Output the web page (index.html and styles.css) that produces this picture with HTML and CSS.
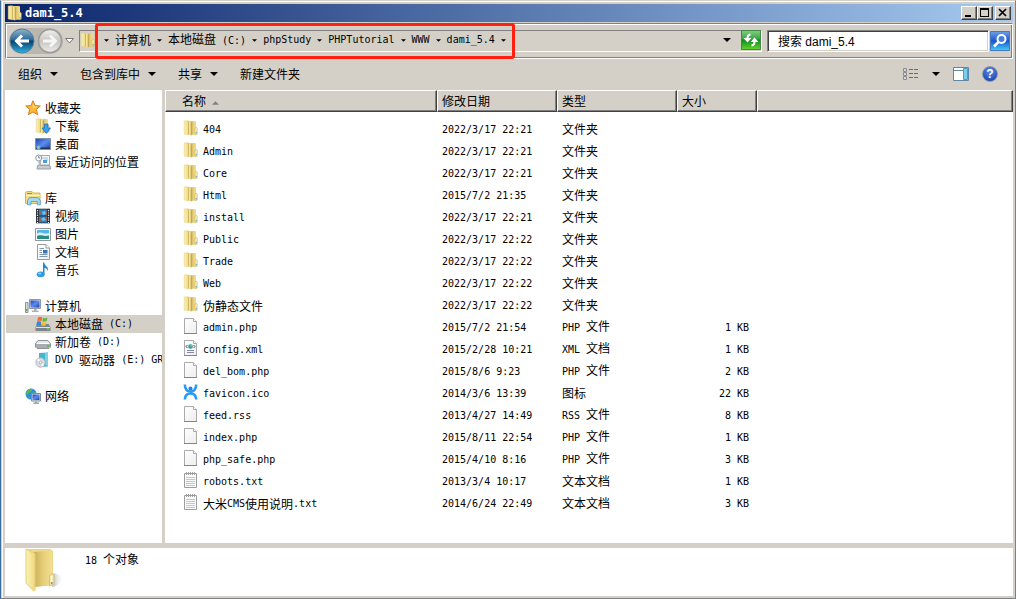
FILE: index.html
```html
<!DOCTYPE html>
<html lang="zh-CN">
<head>
    <meta charset="UTF-8">
    <meta name="viewport" content="width=device-width, initial-scale=1.0">
    <title>dami_5.4</title>
    <link rel="stylesheet" href="styles.css">
</head>
<body>
    <!-- icon sprite -->
    <svg class="sprite" aria-hidden="true">
        <defs>
            <linearGradient id="gFolder" x1="0" x2="1" y1="0" y2="0">
                <stop offset="0" stop-color="#fbf2b4"/><stop offset="1" stop-color="#efd980"/>
            </linearGradient>
            <linearGradient id="gFace" x1="0" x2="1" y1="0" y2="0">
                <stop offset="0" stop-color="#c9ae5c"/><stop offset=".5" stop-color="#e6ce78"/>
                <stop offset="1" stop-color="#f2df90"/>
            </linearGradient>
            <linearGradient id="gBack" x1="0" x2="0" y1="0" y2="1">
                <stop offset="0" stop-color="#8fb4cc"/><stop offset=".45" stop-color="#2c6a98"/>
                <stop offset=".5" stop-color="#0c3f6c"/><stop offset="1" stop-color="#25b4e6"/>
            </linearGradient>
            <linearGradient id="gFwd" x1="0" x2="0" y1="0" y2="1">
                <stop offset="0" stop-color="#f2f1ee"/><stop offset=".5" stop-color="#c6c5c1"/>
                <stop offset="1" stop-color="#ecebe8"/>
            </linearGradient>
            <linearGradient id="gPage" x1="0" x2="1" y1="0" y2="1">
                <stop offset="0" stop-color="#fff"/><stop offset="1" stop-color="#ededed"/>
            </linearGradient>
            <linearGradient id="gGreen" x1="0" x2="0" y1="0" y2="1">
                <stop offset="0" stop-color="#7fd083"/><stop offset=".45" stop-color="#37a542"/>
                <stop offset=".5" stop-color="#0f8c1c"/><stop offset="1" stop-color="#62d32c"/>
            </linearGradient>
            <linearGradient id="gBlue" x1="0" x2="0" y1="0" y2="1">
                <stop offset="0" stop-color="#6f9fe8"/><stop offset=".5" stop-color="#1d55cf"/>
                <stop offset="1" stop-color="#3fd0f7"/>
            </linearGradient>
            <linearGradient id="gScreen" x1="0" x2="1" y1="0" y2="1">
                <stop offset="0" stop-color="#1f3fae"/><stop offset=".5" stop-color="#5b8cf0"/>
                <stop offset="1" stop-color="#1b3aa8"/>
            </linearGradient>
            <linearGradient id="gShade" x1="0" x2="1" y1="0" y2="0">
                <stop offset="0" stop-color="#b5b5b5"/><stop offset="1" stop-color="#fff" stop-opacity="0"/>
            </linearGradient>
        </defs>
        <symbol id="folder" viewBox="0 0 16 16">
            <path d="M2 1H12L13 2V14H2z" fill="#ecd57c"/>
            <path d="M8 1.500H12.500V14.500L8 15z" fill="url(#gFace)"/>
            <path d="M1.200 1L5.500 .8V14.800L1.200 14z" fill="url(#gFolder)" stroke="#e2cb72" stroke-width=".5"/>
            <path d="M5.500 1.500L8 2.500V15.500L5.500 14.500z" fill="#f4e49a"/>
            <path d="M5.500 1.500V14.500" stroke="#cdb05a" stroke-width=".8"/>
            <path d="M8.200 2.500V15.300" stroke="#bd9f4a" stroke-width=".9"/>
            <path d="M12 8Q13.200 6.500 14.200 8V14L12 14.800z" fill="#f8efc0" stroke="#d4b24e" stroke-width=".6"/>
            <path d="M12.700 12h1v1.500h-1z" fill="#4ba7d8"/>
        </symbol>
        <symbol id="page" viewBox="0 0 16 16">
            <path d="M1.500 .5H10.500L13.500 3.500V15.500H1.500z" fill="url(#gPage)" stroke="#aaa"/>
            <path d="M10.500 .5V3.500h3" fill="#fff" stroke="#aaa"/>
            <path d="M1 15.500H14" stroke="#858585"/>
        </symbol>
        <symbol id="xml" viewBox="0 0 16 16">
            <use href="#page"/>
            <circle cx="7.500" cy="6.500" r="2.300" fill="#2f9b8c"/>
            <circle cx="8" cy="6" r="1" fill="#65c9ee"/>
            <path d="M4.500 5L3 6.500 4.500 8M10.500 5L12 6.500 10.500 8" fill="none" stroke="#445"/>
            <path d="M4 10.500H11M4 12.500H11" stroke="#8d86a8"/>
        </symbol>
        <symbol id="txt" viewBox="0 0 16 16">
            <path d="M1.500 1.500H13.500V15.500H1.500z" fill="#f8fafb" stroke="#9c9c9c"/>
            <path d="M3 5.500H12M3 7.500H12M3 9.500H12M3 11.500H12M3 13.500H12" stroke="#b4ccd8"/>
            <path d="M3.500 0V3M5.500 0V3M7.500 0V3M9.500 0V3M11.500 0V3" stroke="#9a9a9a" stroke-width=".9"/>
        </symbol>
        <symbol id="ico" viewBox="0 0 16 16">
            <path d="M1.800 .5C2 5 4 7.500 7.500 7.500S13 5 13.200 .5M1.800 15.500C2 11.500 4 9.500 7.500 9.500S13 11.500 13.200 15.500" fill="none" stroke="#2b9af0" stroke-width="2.600"/>
            <circle cx="7.500" cy="4.500" r="2" fill="#2183dd"/>
        </symbol>
        <symbol id="star" viewBox="0 0 16 16">
            <path d="M8 .8L10.100 5.600 15.300 6 11.300 9.400 12.600 14.700 8 11.900 3.400 14.700 4.700 9.400 .7 6 5.900 5.600z" fill="#fdbb3c" stroke="#d9781c"/>
            <path d="M8 3L9.300 6.500 12.500 6.800 8 8z" fill="#ffe79a"/>
        </symbol>
        <symbol id="download" viewBox="0 0 16 16">
            <use href="#folder"/>
            <path d="M9.500 6h3.500v4H15.500L11.300 15.500 7 10H9.500z" fill="#3ba2ea" stroke="#1669b8" stroke-width=".7"/>
        </symbol>
        <symbol id="desktop" viewBox="0 0 16 16">
            <path d="M.5 2.500H15.500V13.500H.5z" fill="url(#gScreen)" stroke="#7f93a6"/>
            <path d="M1 11.500H15V13H1z" fill="#26334a"/>
            <circle cx="3.500" cy="11.500" r="2" fill="#4fc3e8"/>
            <path d="M3 10.500h1v1H3z" fill="#f6d048"/>
        </symbol>
        <symbol id="recent" viewBox="0 0 16 16">
            <path d="M5.500 1.500H14.500V11H5.500z" fill="#f4f7f9" stroke="#a5adb3"/>
            <path d="M7 4h6M9 6h4" stroke="#a4bccb"/>
            <path d="M8 6h4v3H8z" fill="#4a9bd6"/>
            <path d="M2.500 11.500H15L15.500 15H2z" fill="#c8cccf" stroke="#9a9fa3"/>
            <path d="M4.500 7V12" stroke="#b4bac0" stroke-width="2"/>
            <circle cx="3.700" cy="4" r="3" fill="#fff" stroke="#8b98a4"/>
            <path d="M3.700 2V4H5.200" fill="none" stroke="#4e6478" stroke-width=".8"/>
        </symbol>
        <symbol id="library" viewBox="0 0 16 16">
            <path d="M.5 2.500L2 1.500H7L8.500 3H15V13.500H.5z" fill="#f2dc87" stroke="#d5b456"/>
            <path d="M2 3.500H7" stroke="#58a64a"/>
            <path d="M1 5.500H15" stroke="#fff7cd"/>
            <path d="M2.500 14.800V10.500L4.500 7.500H13L15.300 10.500V14.800H12.300V11.500H6V14.800z" fill="#9fd8ef" stroke="#4c9ac5" stroke-width=".8"/>
        </symbol>
        <symbol id="video" viewBox="0 0 16 16">
            <path d="M1 .7H15V15.300H1z" fill="#273039"/>
            <path d="M4 1.500H12V7.500H4zM4 8.500H12V14.500H4z" fill="#2d82c7"/>
            <path d="M4 2L7 5 4 7.500M12 2L9 5 12 7.500M4 9L8 12 4 14.500M12 9L9 11 12 13" fill="#9f5d4b"/>
            <path d="M7 4L10 3 11 6 8 7zM6 11l3-2 2 3-3 1z" fill="#65c6f0"/>
            <path d="M2.500 2V15M13.500 2V15" stroke="#e8eef2" stroke-width="1.200" stroke-dasharray="1.200 1.200"/>
        </symbol>
        <symbol id="picture" viewBox="0 0 16 16">
            <path d="M.5 2.500H15.500V14.500H.5z" fill="#fff" stroke="#8c979f"/>
            <path d="M2 4H14V13H2z" fill="#54b3e8"/>
            <path d="M2 8C5 4 9 9 14 7V10H2z" fill="#d9f1f7"/>
            <path d="M2 10C5 8 9 11 14 9.500V13H2z" fill="#278d82"/>
        </symbol>
        <symbol id="document" viewBox="0 0 16 16">
            <path d="M2.500 .5H11L14.500 4V15.500H2.500z" fill="url(#gPage)" stroke="#9a9a9a"/>
            <path d="M11 .5V4h3.500" fill="#fff" stroke="#9a9a9a"/>
            <path d="M4.500 4.500H9M4.500 6.500H7M4.500 8.500H7M4.500 10.500H12.500M4.500 12.500H12.500" stroke="#8198ad"/>
            <path d="M8 6H12.500V9.500H8z" fill="#3574b8"/>
        </symbol>
        <symbol id="music" viewBox="0 0 16 16">
            <path d="M8 .5H9.300C9.500 4 14 4.500 13 9 12.300 7 11 6.200 9.500 6V12H8z" fill="#2388cf"/>
            <ellipse cx="5.700" cy="12.300" rx="4" ry="2.900" fill="#2d9be2"/>
            <ellipse cx="4.700" cy="11.500" rx="1.700" ry="1" fill="#8bd1f7"/>
        </symbol>
        <symbol id="computer" viewBox="0 0 16 16">
            <path d="M.5 4.500H3V14.500H.5z" fill="#d8dde0" stroke="#8b9298"/>
            <path d="M1 11h1.500v2H1z" fill="#4fb44a"/>
            <path d="M4.500 1.500H15.500V10.500H4.500z" fill="#d5dbdf" stroke="#8d98a2"/>
            <path d="M5.500 2.500H14.500V9.500H5.500z" fill="url(#gScreen)"/>
            <path d="M9 11h2.500v1.500H9zM7 12.500H13.500V14H7z" fill="#aab1b7"/>
        </symbol>
        <symbol id="cdrive" viewBox="0 0 16 16">
            <path d="M2.500 8H13.500L15.500 11V15H.5V11z" fill="#7c858c"/>
            <path d="M1 11.500H15" stroke="#dfe4e7"/>
            <path d="M12 13h2" stroke="#62d747" stroke-width="1.500"/>
            <path d="M3 1.500C5 .3 6 1 7.300 1.500L6.500 5C5 4.500 4 4.500 2.200 5z" fill="#ee6a36"/>
            <path d="M8 1.800C9.500 2.500 11 2.300 12.500 1.500L11.600 5C10 5.800 8.500 5.600 7.300 5.200z" fill="#69b53b"/>
            <path d="M2 5.700C4 4.900 5 5.300 6.300 5.800L5.500 9.300C4 8.700 3 8.800 1.300 9.300z" fill="#3887d6"/>
            <path d="M7 6C8.500 6.700 10 6.500 11.400 5.900L10.600 9.400C9 10 7.500 9.800 6.200 9.400z" fill="#f5bd30"/>
        </symbol>
        <symbol id="drive" viewBox="0 0 16 16">
            <path d="M3 6.500H13L15.500 9.500V13L14 14.500H2L.5 13V9.500z" fill="#e4e6e7" stroke="#8d9296"/>
            <path d="M1 9.800H15V13L14 14H2L1 13z" fill="#a9adb0"/>
            <path d="M2 9.500H14" stroke="#fff"/>
            <path d="M12 12h2" stroke="#43bd36" stroke-width="1.500"/>
        </symbol>
        <symbol id="dvd" viewBox="0 0 16 16">
            <path d="M4 1L13 .5V14.500L4 15z" fill="#47b5cf"/>
            <path d="M10 1L13 .5V14.500L10 12z" fill="#7bd5e3"/>
            <circle cx="5.500" cy="10.500" r="4.700" fill="#d9dee2" stroke="#9da4aa" stroke-width=".7"/>
            <path d="M5.500 10.500L2 8 4 6.500zM5.500 10.500L9 13 7.500 14.500z" fill="#fff"/>
            <circle cx="5.500" cy="10.500" r="1.300" fill="#fff" stroke="#8f989e" stroke-width=".7"/>
        </symbol>
        <symbol id="network" viewBox="0 0 16 16">
            <circle cx="6" cy="6" r="5.500" fill="#2e8de0"/>
            <path d="M2 3C4 .8 6 .5 7.500 1L6 4 3.500 5 2.500 7 1 6zM8 4L11 5 9 8 6 8zM3 8L5 9 5 11z" fill="#57bb44"/>
            <path d="M6.500 5.500H15.500V13H6.500z" fill="#dbe3e8" stroke="#7f8e9b"/>
            <path d="M7.500 6.500H14.500V12H7.500z" fill="url(#gScreen)"/>
            <path d="M10 13.500H12V14.500H14V16H8.500V14.500H10z" fill="#9ba6ae"/>
        </symbol>
        <symbol id="tri" viewBox="0 0 8 4">
            <path d="M0 0H8L4 4z" fill="#000"/>
        </symbol>
    </svg>

    <div class="window">
        <header class="titlebar">
            <svg class="icon"><use href="#folder"/></svg>
            <h1>dami_5.4</h1>
            <button class="winbtn" aria-label="最小化"><svg viewBox="0 0 12 10"><path d="M2 7H8V9H2z"/></svg></button>
            <button class="winbtn" aria-label="最大化"><svg viewBox="0 0 12 10"><path d="M1 0H10V9H1zM2 2V8H9V2z" fill-rule="evenodd"/></svg></button>
            <button class="winbtn close" aria-label="关闭"><svg viewBox="0 0 12 10"><path d="M2 1L9 8M9 1L2 8" stroke="#000" stroke-width="1.700"/></svg></button>
        </header>

        <div class="navbar">
            <div class="history">
                <div class="pill">
                    <button aria-label="后退"><svg viewBox="0 0 26 26">
                        <circle cx="13" cy="13" r="12" fill="url(#gBack)" stroke="#5a7f99"/>
                        <path d="M20 13H8M13 7.500L7.500 13 13 18.500" fill="none" stroke="#fff" stroke-width="3"/>
                    </svg></button>
                    <button aria-label="前进"><svg viewBox="0 0 26 26">
                        <circle cx="13" cy="13" r="11.500" fill="url(#gFwd)" stroke="#9b9b99" stroke-width="1.500"/>
                        <path d="M6 13H18M13 7.500L18.500 13 13 18.500" fill="none" stroke="#f6f6f4" stroke-width="3"/>
                    </svg></button>
                </div>
                <button aria-label="最近的页面"><svg class="recent-arrow" viewBox="0 0 9 6"><path d="M.5 .5H8.500L4.500 5z" fill="#fff" stroke="#777"/></svg></button>
            </div>
            <nav class="address" aria-label="地址">
                <svg class="icon"><use href="#folder"/></svg>
                <button class="chev" aria-label="展开"><svg><use href="#tri"/></svg></button>
                <a href="#">计算机</a>
                <button class="chev" aria-label="展开"><svg><use href="#tri"/></svg></button>
                <a href="#">本地磁盘<span class="en"> (C:)</span></a>
                <button class="chev" aria-label="展开"><svg><use href="#tri"/></svg></button>
                <a href="#" class="en">phpStudy</a>
                <button class="chev" aria-label="展开"><svg><use href="#tri"/></svg></button>
                <a href="#" class="en">PHPTutorial</a>
                <button class="chev" aria-label="展开"><svg><use href="#tri"/></svg></button>
                <a href="#" class="en">WWW</a>
                <button class="chev" aria-label="展开"><svg><use href="#tri"/></svg></button>
                <a href="#" class="en">dami_5.4</a>
                <button class="chev" aria-label="展开"><svg><use href="#tri"/></svg></button>
                <button class="drop" aria-label="历史记录"><svg class="arrow"><use href="#tri"/></svg></button>
                <button class="go" aria-label="刷新"><svg viewBox="0 0 20 20">
                    <path d="M.5 .5H19.500V19.500H.5z" fill="url(#gGreen)" stroke="#3f8a45"/>
                    <path d="M9.500 4.500Q6.500 5 6.500 8V9M10.500 15.500Q13.500 15 13.500 12V11" fill="none" stroke="#fff" stroke-width="2"/>
                    <path d="M2.500 8H10.500L6.500 12.500zM9.500 12H17.500L13.500 7.500z" fill="#fff"/>
                </svg></button>
                <span class="highlight"></span>
            </nav>
            <form class="search">
                <input type="text" value="搜索 dami_5.4" aria-label="搜索">
                <button type="button" class="go" aria-label="搜索"><svg viewBox="0 0 20 20">
                    <path d="M.5 .5H19.500V19.500H.5z" fill="url(#gBlue)" stroke="#4a78c0"/>
                    <circle cx="11.500" cy="8" r="4" fill="#3f7fe0" stroke="#fff" stroke-width="2"/>
                    <path d="M8.500 11L4 15.500" stroke="#fff" stroke-width="2.500"/>
                </svg></button>
            </form>
        </div>

        <div class="toolbar">
            <button>组织<svg class="arrow"><use href="#tri"/></svg></button>
            <button>包含到库中<svg class="arrow"><use href="#tri"/></svg></button>
            <button>共享<svg class="arrow"><use href="#tri"/></svg></button>
            <button>新建文件夹</button>
            <div class="view-tools">
                <button aria-label="更改视图"><svg class="icon" viewBox="0 0 16 16">
                    <path d="M.5 2.500h3v3h-3zM.5 6.500h3v3h-3zM.5 10.500h3v3h-3z" fill="#fff" stroke="#8b8b8b"/>
                    <path d="M2 3.500v1M2 7.500v1M2 11.500v1" stroke="#3e6a9a"/>
                    <path d="M6 3.500H15M6 7.500H15M6 11.500H15" stroke="#5f6f7b" stroke-dasharray="4 1"/>
                </svg></button>
                <button aria-label="更多选项"><svg class="arrow"><use href="#tri"/></svg></button>
                <button aria-label="预览窗格"><svg class="icon" viewBox="0 0 16 16">
                    <path d="M.5 1.500H15.500V14.500H.5z" fill="#fff" stroke="#5e86a8"/>
                    <path d="M1 4.500H10" stroke="#5e86a8"/>
                    <path d="M10.500 2.500H14.500V13.500H10.500z" fill="#79cfe8" stroke="#4d9fbf"/>
                </svg></button>
                <button aria-label="帮助" class="help">?</button>
            </div>
        </div>

        <main class="panes">
            <nav class="tree">
                <ul>
                    <li><a href="#"><svg class="icon"><use href="#star"/></svg>收藏夹</a></li>
                    <li class="child"><a href="#"><svg class="icon"><use href="#download"/></svg>下载</a></li>
                    <li class="child"><a href="#"><svg class="icon"><use href="#desktop"/></svg>桌面</a></li>
                    <li class="child"><a href="#"><svg class="icon"><use href="#recent"/></svg>最近访问的位置</a></li>
                </ul>
                <ul>
                    <li><a href="#"><svg class="icon"><use href="#library"/></svg>库</a></li>
                    <li class="child"><a href="#"><svg class="icon"><use href="#video"/></svg>视频</a></li>
                    <li class="child"><a href="#"><svg class="icon"><use href="#picture"/></svg>图片</a></li>
                    <li class="child"><a href="#"><svg class="icon"><use href="#document"/></svg>文档</a></li>
                    <li class="child"><a href="#"><svg class="icon"><use href="#music"/></svg>音乐</a></li>
                </ul>
                <ul>
                    <li><a href="#"><svg class="icon"><use href="#computer"/></svg>计算机</a></li>
                    <li class="child selected"><a href="#"><svg class="icon"><use href="#cdrive"/></svg>本地磁盘<span class="en"> (C:)</span></a></li>
                    <li class="child"><a href="#"><svg class="icon"><use href="#drive"/></svg>新加卷<span class="en"> (D:)</span></a></li>
                    <li class="child"><a href="#"><svg class="icon"><use href="#dvd"/></svg><span class="en">DVD </span>驱动器<span class="en"> (E:) GR</span></a></li>
                </ul>
                <ul>
                    <li><a href="#"><svg class="icon"><use href="#network"/></svg>网络</a></li>
                </ul>
            </nav>

            <div class="list">
                <table>
                    <colgroup>
                        <col class="c-name"><col class="c-date"><col class="c-type"><col class="c-size"><col>
                    </colgroup>
                    <thead>
                        <tr>
                            <th>名称<svg class="sort" viewBox="0 0 8 4"><path d="M0 4H8L4 0z" fill="#808080"/></svg></th>
                            <th>修改日期</th>
                            <th>类型</th>
                            <th>大小</th>
                            <th></th>
                        </tr>
                    </thead>
                    <tbody>
                        <tr><td><svg class="icon"><use href="#folder"/></svg><span class="en">404</span></td><td class="en">2022/3/17 22:21</td><td>文件夹</td><td></td><td></td></tr>
                        <tr><td><svg class="icon"><use href="#folder"/></svg><span class="en">Admin</span></td><td class="en">2022/3/17 22:21</td><td>文件夹</td><td></td><td></td></tr>
                        <tr><td><svg class="icon"><use href="#folder"/></svg><span class="en">Core</span></td><td class="en">2022/3/17 22:21</td><td>文件夹</td><td></td><td></td></tr>
                        <tr><td><svg class="icon"><use href="#folder"/></svg><span class="en">Html</span></td><td class="en">2015/7/2 21:35</td><td>文件夹</td><td></td><td></td></tr>
                        <tr><td><svg class="icon"><use href="#folder"/></svg><span class="en">install</span></td><td class="en">2022/3/17 22:21</td><td>文件夹</td><td></td><td></td></tr>
                        <tr><td><svg class="icon"><use href="#folder"/></svg><span class="en">Public</span></td><td class="en">2022/3/17 22:22</td><td>文件夹</td><td></td><td></td></tr>
                        <tr><td><svg class="icon"><use href="#folder"/></svg><span class="en">Trade</span></td><td class="en">2022/3/17 22:22</td><td>文件夹</td><td></td><td></td></tr>
                        <tr><td><svg class="icon"><use href="#folder"/></svg><span class="en">Web</span></td><td class="en">2022/3/17 22:22</td><td>文件夹</td><td></td><td></td></tr>
                        <tr><td><svg class="icon"><use href="#folder"/></svg>伪静态文件</td><td class="en">2022/3/17 22:22</td><td>文件夹</td><td></td><td></td></tr>
                        <tr><td><svg class="icon"><use href="#page"/></svg><span class="en">admin.php</span></td><td class="en">2015/7/2 21:54</td><td><span class="en">PHP </span>文件</td><td class="en">1 KB</td><td></td></tr>
                        <tr><td><svg class="icon"><use href="#xml"/></svg><span class="en">config.xml</span></td><td class="en">2015/2/28 10:21</td><td><span class="en">XML </span>文档</td><td class="en">1 KB</td><td></td></tr>
                        <tr><td><svg class="icon"><use href="#page"/></svg><span class="en">del_bom.php</span></td><td class="en">2015/8/6 9:23</td><td><span class="en">PHP </span>文件</td><td class="en">2 KB</td><td></td></tr>
                        <tr><td><svg class="icon"><use href="#ico"/></svg><span class="en">favicon.ico</span></td><td class="en">2014/3/6 13:39</td><td>图标</td><td class="en">22 KB</td><td></td></tr>
                        <tr><td><svg class="icon"><use href="#page"/></svg><span class="en">feed.rss</span></td><td class="en">2013/4/27 14:49</td><td><span class="en">RSS </span>文件</td><td class="en">8 KB</td><td></td></tr>
                        <tr><td><svg class="icon"><use href="#page"/></svg><span class="en">index.php</span></td><td class="en">2015/8/11 22:54</td><td><span class="en">PHP </span>文件</td><td class="en">1 KB</td><td></td></tr>
                        <tr><td><svg class="icon"><use href="#page"/></svg><span class="en">php_safe.php</span></td><td class="en">2015/4/10 8:16</td><td><span class="en">PHP </span>文件</td><td class="en">3 KB</td><td></td></tr>
                        <tr><td><svg class="icon"><use href="#txt"/></svg><span class="en">robots.txt</span></td><td class="en">2013/3/4 10:17</td><td>文本文档</td><td class="en">1 KB</td><td></td></tr>
                        <tr><td><svg class="icon"><use href="#txt"/></svg>大米<span class="en">CMS</span>使用说明<span class="en">.txt</span></td><td class="en">2014/6/24 22:49</td><td>文本文档</td><td class="en">3 KB</td><td></td></tr>
                    </tbody>
                </table>
            </div>
        </main>

        <footer class="details">
            <svg class="big-folder" viewBox="0 0 40 44">
                <path d="M27 39L29 25 39 29C36 35 33 38 27 39z" fill="url(#gShade)"/>
                <path d="M2 1H25L28 3V25L29 26V37L10 39z" fill="#ecd584"/>
                <path d="M9 4L27 3V37L9 39z" fill="url(#gFace)"/>
                <path d="M1 1L10 6V42L8.500 43 1 35z" fill="url(#gFolder)" stroke="#e6cf78"/>
                <path d="M24.500 28Q26.500 24 29 27V36L24.500 38z" fill="#f3e3a0" stroke="#dcc16a"/>
                <path d="M26.500 28V34" stroke="#fff" stroke-width="1.500"/>
                <path d="M26 34h1.500v2H26z" fill="#4aa3d4"/>
            </svg>
            <p><span class="en">18 </span>个对象</p>
        </footer>
    </div>
</body>
</html>
```
FILE: styles.css
```css
* {
    box-sizing: border-box;
}
body {
    margin: 0;
    background-color: #d4d0c8;
    color: #000;
    font-family: "Noto Sans CJK SC", sans-serif;
    font-size: 12px;
    line-height: 18px;
}
/* latin text is half the width of a chinese glyph */
.en {
    font-family: "DejaVu Sans Mono", monospace;
    font-size: 10px;
    white-space: pre;
}
a {
    color: inherit;
    text-decoration: none;
}
button {
    display: flex;
    align-items: center;
    padding: 0;
    border: none;
    background: none;
    color: inherit;
    font: inherit;
}
svg {
    display: block;
    flex: none;
}
.sprite {
    position: absolute;
    width: 0;
    height: 0;
}
.icon {
    width: 16px;
    height: 16px;
}
.arrow {
    width: 8px;
    height: 4px;
}
.window {
    display: flex;
    flex-direction: column;
    min-height: 100vh;
    padding: 3px 2px 2px 4px;
    border: 1px solid #d4d0c8;
    border-left-color: #3a6ea5;
    border-right-color: #808080;
    border-bottom-color: #808080;
    box-shadow: inset 1px 0 #d4d0c8, inset 2px 1px #fff;
}

/* title bar */
.titlebar {
    display: flex;
    align-items: center;
    height: 18px;
    padding: 0 2px;
    background: linear-gradient(to right, #0a246a, #a6caf0);
    color: #fff;
}
.titlebar h1 {
    flex: 1;
    margin: 0 0 0 2px;
    font: bold 12px "DejaVu Sans Mono", monospace;
}
.winbtn {
    width: 16px;
    height: 14px;
    padding: 1px;
    background-color: #d4d0c8;
    border: 1px solid #fff;
    border-right-color: #404040;
    border-bottom-color: #404040;
    box-shadow: inset -1px -1px #808080;
}
.winbtn svg {
    width: 12px;
    height: 10px;
}
.close {
    margin-left: 2px;
}

/* address row */
.navbar {
    display: flex;
    align-items: center;
    gap: 5px;
    height: 36px;
    margin-top: 1px;
    padding: 0 2px;
    border: 1px solid #808080;
    border-right-color: #fff;
    border-bottom-color: #fff;
    box-shadow: inset 1px 1px #fff, inset -1px -1px #808080;
}
.history {
    display: flex;
    align-items: center;
    gap: 2px;
    width: 66px;
    padding-left: 1px;
}
.pill {
    display: flex;
    gap: 2px;
    border-radius: 13px;
    background-color: #bab7b1;
}
.pill svg {
    width: 26px;
    height: 26px;
}
.recent-arrow {
    width: 9px;
    height: 6px;
}
.address {
    position: relative;
    display: flex;
    flex: 1;
    align-items: center;
    height: 22px;
    padding-bottom: 2px;
    border: 1px solid #808080;
    border-right-color: #fff;
    border-bottom-color: #fff;
}
.address .icon {
    margin-right: 2px;
}
.chev {
    padding: 0 6px;
}
.chev svg {
    width: 5px;
    height: 3px;
}
.drop {
    margin-left: auto;
    padding: 0 10px;
}
.go svg {
    width: 20px;
    height: 20px;
}
.highlight {
    position: absolute;
    top: -8px;
    left: 15px;
    width: 420px;
    height: 36px;
    border: 3px solid #ff2010;
    border-radius: 3px;
    pointer-events: none;
}
.search {
    display: flex;
    align-items: center;
    gap: 1px;
    width: 243px;
}
.search input {
    flex: 1;
    min-width: 0;
    height: 22px;
    padding: 0 10px 2px;
    border: 1px solid #808080;
    border-right-color: #fff;
    border-bottom-color: #fff;
    box-shadow: inset 1px 1px #404040, inset -1px -1px #d4d0c8;
    background-color: #fff;
    font: 12px "Liberation Sans", "Noto Sans CJK SC", sans-serif;
}

/* toolbar */
.toolbar {
    display: flex;
    align-items: center;
    gap: 22px;
    height: 31px;
    padding: 0 15px 2px 13px;
}
.toolbar button {
    gap: 8px;
}
.view-tools {
    display: flex;
    align-items: center;
    gap: 13px;
    margin-left: auto;
}
.toolbar .help {
    justify-content: center;
    width: 16px;
    height: 16px;
    border: 1px solid #8e97a8;
    border-radius: 50%;
    background: radial-gradient(circle at 50% 30%, #5c8cf0, #1238a0);
    color: #fff;
    font: bold 12px "Liberation Sans", sans-serif;
}

/* panes */
.panes {
    display: flex;
    flex: 1;
    gap: 3px;
}
.tree {
    width: 157px;
    padding-top: 9px;
    background-color: #fff;
    overflow: hidden;
}
.tree ul {
    margin: 0 0 18px;
    padding: 0;
    list-style: none;
}
.tree li {
    height: 18px;
    margin-left: 1px;
    padding-left: 19px;
}
.tree .child {
    padding-left: 29px;
}
.tree .selected {
    background-color: #d4d0c8;
}
.tree a {
    display: flex;
    align-items: center;
    height: 18px;
    white-space: nowrap;
}
.tree .icon {
    margin-right: 4px;
}
.list {
    flex: 1;
    background-color: #fff;
}
table {
    width: 100%;
    table-layout: fixed;
    border-spacing: 0;
}
.c-name {
    width: 272px;
}
.c-date,
.c-type {
    width: 120px;
}
.c-size {
    width: 80px;
}
th {
    height: 22px;
    padding: 0 4px;
    border: 1px solid #fff;
    border-right-color: #404040;
    border-bottom-color: #404040;
    box-shadow: inset -1px -1px #808080;
    background-color: #d4d0c8;
    font-weight: normal;
    text-align: left;
}
th:first-child {
    padding-left: 16px;
}
.sort {
    display: inline-block;
    width: 7px;
    height: 4px;
    margin-left: 6px;
    vertical-align: middle;
}
tbody::before {
    content: "";
    display: block;
    height: 6px;
}
td {
    height: 22px;
    padding: 0 5px;
    white-space: nowrap;
}
td.en {
    padding-top: 2px;
}
td:first-child {
    display: flex;
    align-items: center;
    padding-top: 1px;
    padding-left: 18px;
}
td:nth-child(4) {
    padding-right: 8px;
    text-align: right;
}
td .icon {
    margin: 0 4px 3px 0;
}

/* details pane */
.details {
    display: flex;
    height: 48px;
    margin-top: 5px;
    padding-left: 20px;
    background-color: #fff;
}
.big-folder {
    width: 40px;
    height: 44px;
}
.details p {
    margin: 2px 0 0 20px;
}
```
